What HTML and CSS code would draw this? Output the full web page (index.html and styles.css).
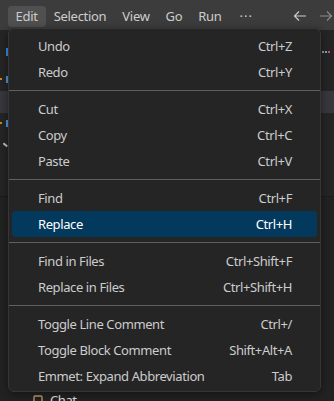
FILE: index.html
```html
<!DOCTYPE html>
<html>
<head>
<meta charset="utf-8">
<link rel="stylesheet" href="styles.css">
</head>
<body>
<div class="titlebar">
  <span class="mb-item mb-file">File</span>
  <span class="mb-item active">Edit</span>
  <span class="mb-item">Selection</span>
  <span class="mb-item">View</span>
  <span class="mb-item">Go</span>
  <span class="mb-item">Run</span>
  <span class="mb-item mb-more">···</span>
  <span class="nav-btn back"><svg width="16" height="16" viewBox="0 0 16 16"><path d="M14 8H2.5M7 3.5L2.5 8 7 12.5" fill="none" stroke="currentColor" stroke-width="1.2"/></svg></span>
  <span class="nav-btn fwd"><svg width="16" height="16" viewBox="0 0 16 16"><path d="M2 8h11.5M9 3.5L13.5 8 9 12.5" fill="none" stroke="currentColor" stroke-width="1.2"/></svg></span>
</div>
<div class="workbench">
  <div class="pane top-pane">
    <div class="row"><span class="mk mk-blue-top"></span><span class="dots"><i class="d g"></i><i class="d b"></i><i class="d r"></i></span></div>
    <div class="row"><span class="mk mk-orange"></span><span class="mk mk-blue"></span></div>
    <div class="row selected"></div>
    <div class="row"><span class="mk mk-orange"></span><span class="mk mk-blue"></span></div>
    <div class="row"><span class="mk mk-chev"></span></div>
  </div>
  <div class="pane bottom-pane">
    <div class="chat-row"><svg class="chat-ic" width="10" height="10" viewBox="0 0 10 10"><rect x="1" y="1" width="8" height="8" rx="1" fill="none" stroke="#c5a16b" stroke-width="1.3"/></svg><span class="chat-text">Chat</span></div>
  </div>
</div>

<div class="menu">
  <div class="item"><span class="label">Undo</span><span class="key">Ctrl+Z</span></div>
  <div class="item"><span class="label">Redo</span><span class="key">Ctrl+Y</span></div>
  <div class="sep"></div>
  <div class="item"><span class="label">Cut</span><span class="key">Ctrl+X</span></div>
  <div class="item"><span class="label">Copy</span><span class="key">Ctrl+C</span></div>
  <div class="item"><span class="label">Paste</span><span class="key">Ctrl+V</span></div>
  <div class="sep"></div>
  <div class="item"><span class="label">Find</span><span class="key">Ctrl+F</span></div>
  <div class="item focused"><span class="label">Replace</span><span class="key">Ctrl+H</span></div>
  <div class="sep"></div>
  <div class="item"><span class="label">Find in Files</span><span class="key">Ctrl+Shift+F</span></div>
  <div class="item"><span class="label">Replace in Files</span><span class="key">Ctrl+Shift+H</span></div>
  <div class="sep"></div>
  <div class="item"><span class="label">Toggle Line Comment</span><span class="key">Ctrl+/</span></div>
  <div class="item"><span class="label">Toggle Block Comment</span><span class="key">Shift+Alt+A</span></div>
  <div class="item"><span class="label">Emmet: Expand Abbreviation</span><span class="key">Tab</span></div>
</div>
</body>
</html>
```

FILE: styles.css
```css
html, body {
  margin: 0;
  padding: 0;
}
body {
  width: 334px;
  height: 401px;
  overflow: hidden;
  background: #1f1f1f;
  font-family: "Noto Sans", "Open Sans", sans-serif;
  font-size: 13px;
  letter-spacing: -0.4px;
  color: #cccccc;
  position: relative;
}
.titlebar {
  height: 30px;
  background: #3c3c3c;
  display: flex;
  align-items: flex-start;
  padding-top: 6px;
  box-sizing: border-box;
  white-space: nowrap;
  overflow: hidden;
  letter-spacing: -0.3px;
}
.mb-item {
  flex-shrink: 0;
  height: 21px;
  line-height: 20px;
  padding: 0 8px;
  border-radius: 4px;
  color: #cccccc;
}
.mb-file {
  margin-left: -28px;
}
.mb-item.active {
  background: #505050;
}
.mb-more {
  margin-left: 2px;
  letter-spacing: 1px;
}
.nav-btn {
  flex-shrink: 0;
  width: 16px;
  height: 16px;
  margin-top: 2px;
  display: flex;
}
.nav-btn.back {
  margin-left: 31px;
  color: #cccccc;
}
.nav-btn.fwd {
  margin-left: 10px;
  color: #8a8a8a;
}
.workbench {
  display: flex;
  flex-direction: column;
}
.pane {
  background: #252526;
}
.top-pane {
  height: 167px;
  padding-top: 17px;
  box-sizing: border-box;
  border-bottom: 1px solid #1b1b1b;
}
.bottom-pane {
  height: 204px;
  background: #222222;
  padding-top: 195px;
  box-sizing: border-box;
}
.row {
  height: 22px;
  position: relative;
}
.row.selected {
  background: #37373d;
}
.mk {
  position: absolute;
  display: block;
}
.mk-blue-top {
  left: 6px;
  top: 1px;
  width: 2px;
  height: 8px;
  background: #3b8eea;
}
.mk-orange {
  left: 0;
  top: 9px;
  width: 2px;
  height: 2px;
  background: #d18616;
}
.mk-blue {
  left: 6px;
  top: 7px;
  width: 2px;
  height: 7px;
  background: #4d9be6;
}
.mk-chev {
  left: 3px;
  top: 9px;
  width: 5px;
  height: 1.5px;
  background: #c5c5c5;
  transform: rotate(40deg);
}
.dots {
  position: absolute;
  left: 322px;
  top: 4px;
  display: flex;
  gap: 1px;
}
.d {
  display: block;
  width: 2px;
  height: 2px;
}
.d.g { background: #9a9a9a; }
.d.b { background: #6aa7e6; }
.d.r { background: #d05050; }
.chat-row {
  display: flex;
  align-items: center;
  gap: 7px;
  padding-left: 33px;
  height: 16px;
}
.chat-text {
  color: #e0e0e0;
}
.menu {
  position: absolute;
  left: 8px;
  top: 28px;
  width: 313px;
  box-sizing: border-box;
  background: #252526;
  border: 1px solid #363636;
  border-radius: 6px;
  padding: 4px 0 2px;
  box-shadow: 0 2px 8px rgba(0, 0, 0, 0.45);
}
.item {
  display: flex;
  justify-content: space-between;
  align-items: center;
  height: 26px;
  margin: 0 3px;
  padding: 0 25px 0 26px;
  border-radius: 4px;
  color: #cccccc;
  white-space: nowrap;
}
.item.focused {
  background: #04395e;
  color: #ffffff;
}
.sep {
  height: 1px;
  margin: 5px 0;
  background: #606060;
}
```
